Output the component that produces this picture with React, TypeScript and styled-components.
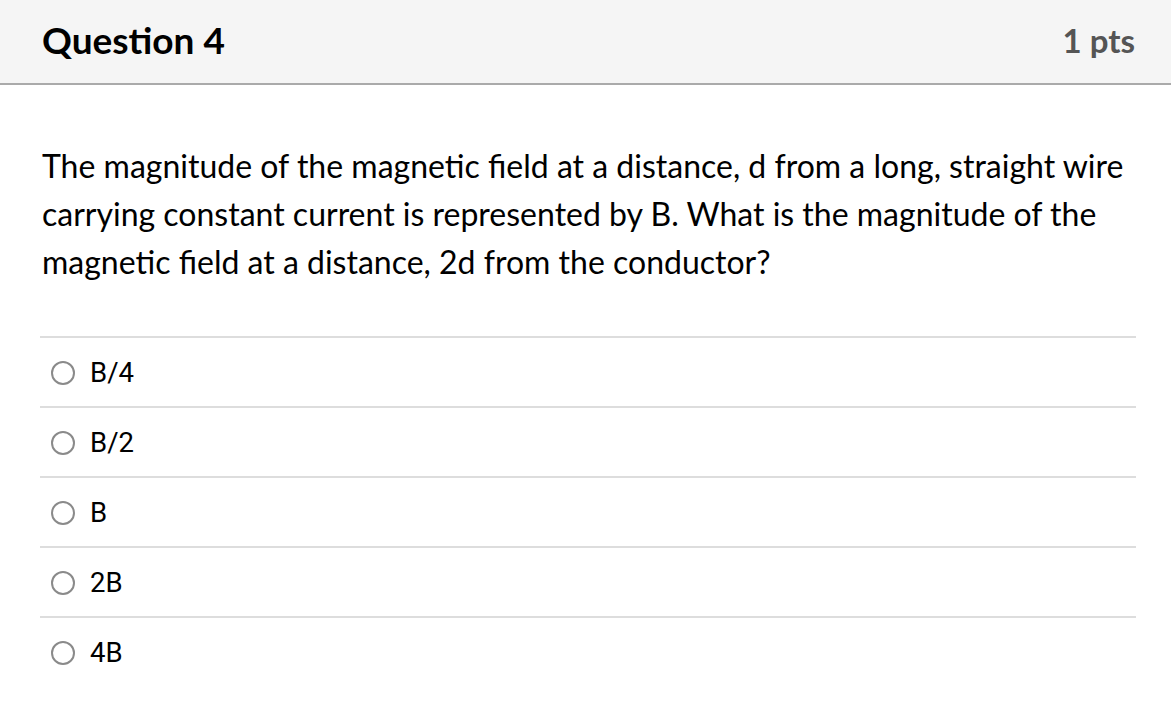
import React from "react";
import styled, { createGlobalStyle } from "styled-components";

const GlobalStyle = createGlobalStyle`
  html, body {
    margin: 0;
    padding: 0;
    background: #ffffff;
  }
  * {
    box-sizing: border-box;
  }
`;

const answers = ["B/4", "B/2", "B", "2B", "4B"];

export default function App() {
  return (
    <>
      <GlobalStyle />
      <Page>
        <Header>
          <Title>Question 4</Title>
          <Points>1 pts</Points>
        </Header>
        <Body>
          <QuestionText>
            The magnitude of the magnetic field at a distance, d from a long, straight wire
            carrying constant current is represented by B. What is the magnitude of the
            magnetic field at a distance, 2d from the conductor?
          </QuestionText>
          <AnswerList>
            {answers.map((a) => (
              <Answer key={a}>
                <Radio />
                <AnswerLabel>{a}</AnswerLabel>
              </Answer>
            ))}
          </AnswerList>
        </Body>
      </Page>
    </>
  );
}

const Page = styled.div`
  width: 1171px;
  min-height: 722px;
  background: #ffffff;
`;

const Header = styled.div`
  display: flex;
  align-items: center;
  justify-content: space-between;
  height: 85px;
  padding: 0 36px 4px 42px;
  background: #f5f5f5;
  border-bottom: 2px solid #aaaaaa;
`;

const Title = styled.h2`
  margin: 0;
  font-family: Lato, "Liberation Sans", sans-serif;
  font-weight: 700;
  font-size: 37px;
  color: #000000;
`;

const Points = styled.div`
  font-family: Lato, "Liberation Sans", sans-serif;
  font-weight: 700;
  font-size: 33px;
  color: #555555;
`;

const Body = styled.div`
  padding: 0 35px 0 40px;
`;

const QuestionText = styled.p`
  margin: 0 -25px 0 0;
  padding: 57px 0 50px 2px;
  font-family: Lato, "Liberation Sans", sans-serif;
  font-size: 32px;
  line-height: 48px;
  color: #000000;
`;

const AnswerList = styled.div`
  display: flex;
  flex-direction: column;
`;

const Answer = styled.label`
  display: flex;
  align-items: center;
  gap: 15px;
  height: 70px;
  padding: 1px 0 0 11px;
  border-top: 2px solid #dddddd;
`;

const Radio = styled.span`
  width: 24px;
  height: 24px;
  border-radius: 50%;
  border: 2px solid #8a8a8a;
  background: #ffffff;
  flex-shrink: 0;
`;

const AnswerLabel = styled.span`
  font-family: Roboto, "Liberation Sans", sans-serif;
  font-size: 27.5px;
  color: #000000;
`;
